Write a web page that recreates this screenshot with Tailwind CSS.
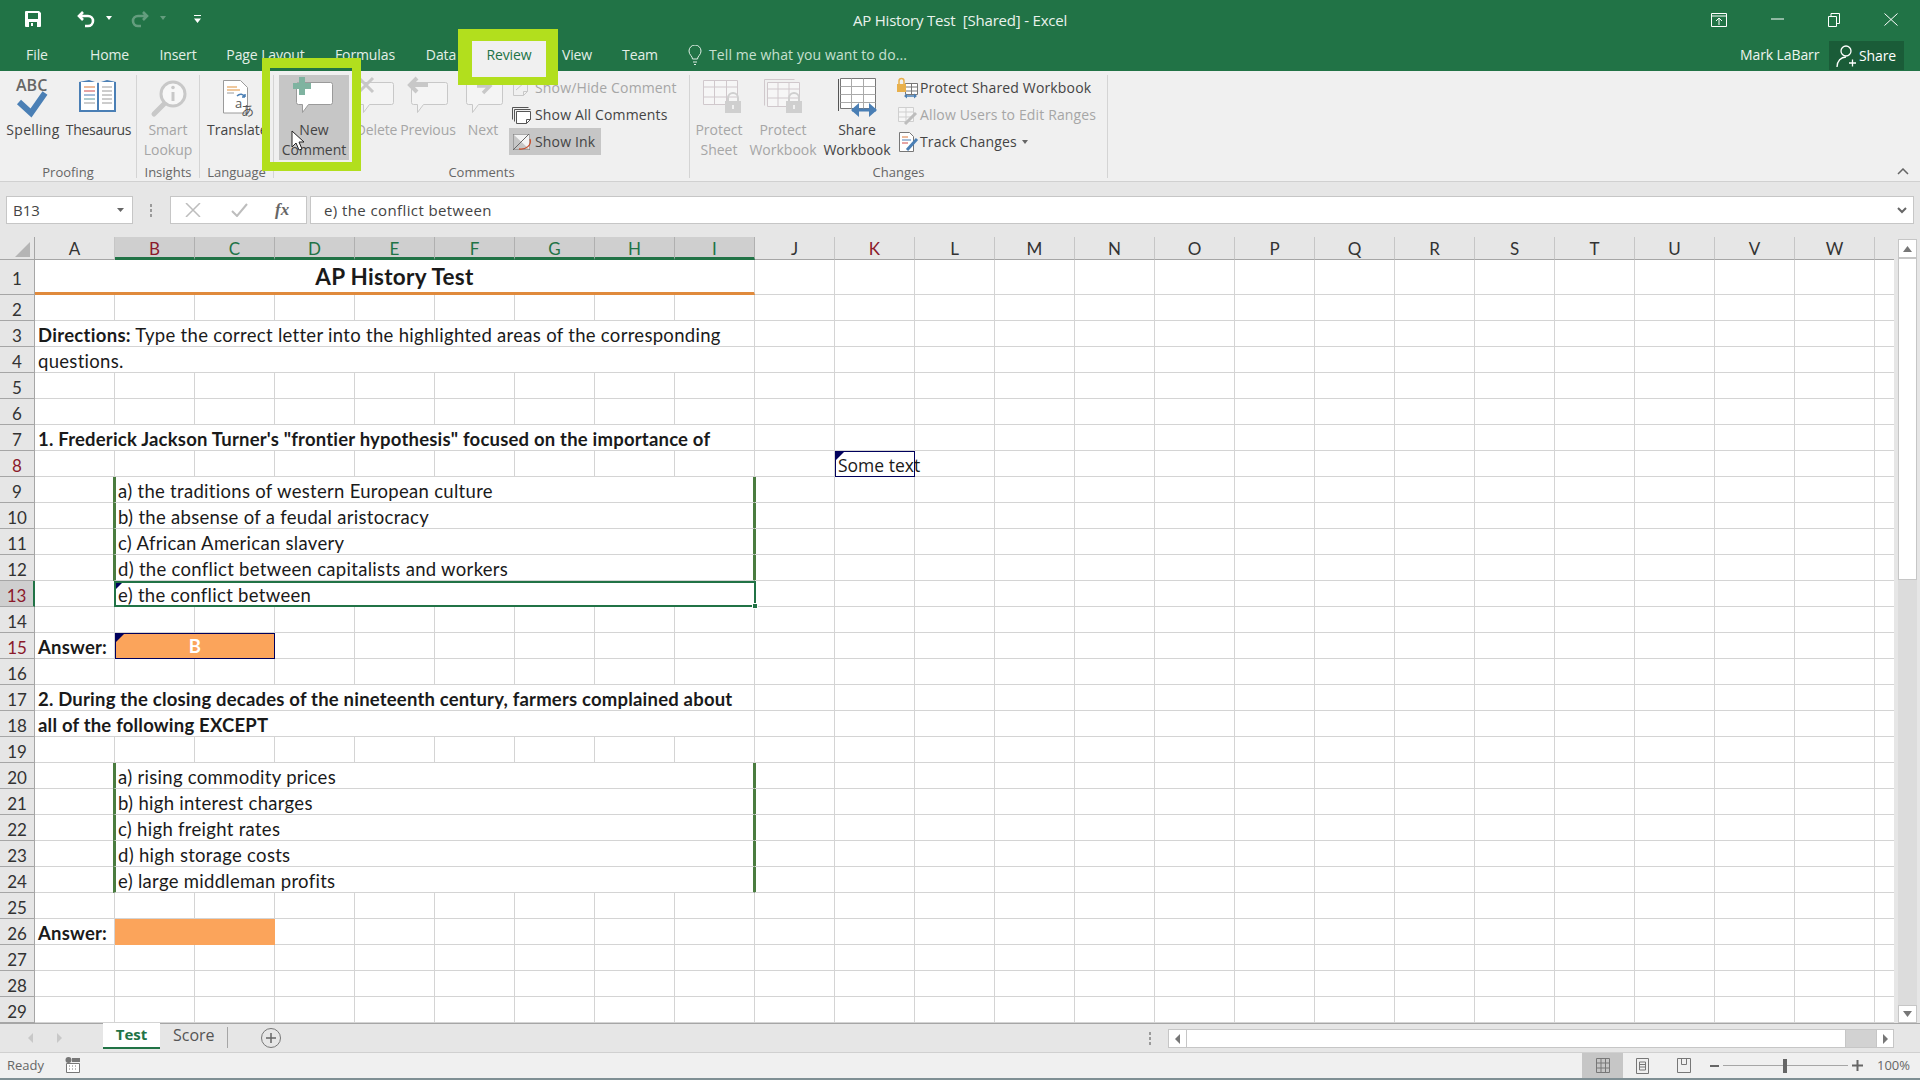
<!DOCTYPE html>
<html lang="en">
<head>
  <meta charset="UTF-8">
  <title>AP History Test [Shared] - Excel</title>
  <script src="https://cdn.jsdelivr.net/npm/@tailwindcss/browser@4"></script>
</head>
<body class="bg-white">
<div class="relative w-[1920px] h-[1080px] overflow-hidden flex flex-col font-['Open_Sans',sans-serif] text-[14px] text-[#444]">

  <!-- title bar + tabs -->
  <header class="h-[71px] bg-[#217346] text-white flex flex-col shrink-0">
    <div class="h-[37px] flex items-center relative">
      <svg class="absolute left-[25px] top-[11px] w-[16px] h-[16px]" viewBox="0 0 16 16"><path d="M1 0h13l2 2v13a1 1 0 0 1-1 1H1a1 1 0 0 1-1-1V1a1 1 0 0 1 1-1z" fill="#fff"/><path d="M3 2h10v6H3z" fill="#217346"/><path d="M4 11h8v5H4z" fill="#217346"/><path d="M6 12h2v3H6z" fill="#fff"/></svg>
      <svg class="absolute left-[76px] top-[10px] w-[20px] h-[18px]" viewBox="0 0 20 18"><path d="M7 2L3 6l4 4M3 6h9a4.500 4.500 0 0 1 0 10H9" fill="none" stroke="#fff" stroke-width="2.600"/></svg>
      <svg class="absolute left-[106px] top-[16px] w-[6px] h-[4px]" viewBox="0 0 6 4"><path d="M0 0h6L3 4z" fill="#fff"/></svg>
      <svg class="absolute left-[130px] top-[10px] w-[20px] h-[18px] opacity-30" viewBox="0 0 20 18"><path d="M13 2l4 4-4 4M17 6H8a4.500 4.500 0 0 0 0 10h3" fill="none" stroke="#fff" stroke-width="2.600"/></svg>
      <svg class="absolute left-[160px] top-[16px] w-[6px] h-[4px] opacity-30" viewBox="0 0 6 4"><path d="M0 0h6L3 4z" fill="#fff"/></svg>
      <svg class="absolute left-[194px] top-[15px] w-[7px] h-[8px]" viewBox="0 0 7 8"><path d="M0 0h7v1H0zM0 3.500h7L3.500 8z" fill="#fff"/></svg>
      <div class="w-full pt-[3px] text-center text-[15px] text-[#e9f2ec] tracking-[-0.2px] whitespace-pre">AP History Test  [Shared] - Excel</div>
      <svg class="absolute left-[1711px] top-[13px] w-[16px] h-[14px]" viewBox="0 0 16 14"><path d="M.5.500h15v13H.500zM.5 3h15M8 12V5M5 8l3-3 3 3" fill="none" stroke="#fff"/></svg>
      <svg class="absolute left-[1771px] top-[18px] w-[13px] h-[2px]" viewBox="0 0 13 2"><path d="M0 1h13" stroke="#fff"/></svg>
      <svg class="absolute left-[1828px] top-[13px] w-[12px] h-[14px]" viewBox="0 0 12 14"><path d="M.5 3.500h8v10h-8zM3 3.500V.500h8.500v10H8.500" fill="none" stroke="#fff"/></svg>
      <svg class="absolute left-[1884px] top-[13px] w-[14px] h-[13px]" viewBox="0 0 14 13"><path d="M.5.500l13 12M13.500.500l-13 12" fill="none" stroke="#fff"/></svg>
    </div>
    <div class="h-[34px] flex items-center relative text-[14px] text-[#e3efe7] tracking-[-0.1px] pt-px">
      <div class="w-[74px] text-center">File</div>
      <div class="w-[71px] text-center">Home</div>
      <div class="w-[66px] text-center">Insert</div>
      <div class="w-[109px] text-center">Page Layout</div>
      <div class="w-[90px] text-center">Formulas</div>
      <div class="w-[62px] text-center">Data</div>
      <div class="w-[74px] h-full bg-[#f0f0f0] text-[#217346] flex items-center justify-center">Review</div>
      <div class="w-[62px] text-center">View</div>
      <div class="w-[64px] text-center">Team</div>
      <svg class="ml-[15px] w-[16px] h-[20px]" viewBox="0 0 16 20"><path d="M5.500 14c0-3-3.500-4-3.500-8a6 6 0 0 1 12 0c0 4-3.500 5-3.500 8zM6 17h4M7 19.500h2" fill="none" stroke="#dfeee5"/></svg>
      <div class="ml-[6px] text-[#c6e0d0] tracking-[0.1px]">Tell me what you want to do...</div>
      <div class="absolute left-[1740px] top-[7px] text-[#eef5f0]">Mark LaBarr</div>
      <div class="absolute left-[1829px] top-[4px] w-[75px] h-[29px] bg-[#1a5c38] flex items-center">
        <svg class="ml-[7px] w-[21px] h-[24px]" viewBox="0 0 21 24"><circle cx="10" cy="7" r="5" fill="none" stroke="#fff" stroke-width="1.300"/><path d="M1 23c0-6 4-10 9-10M13 19h7M16.500 15.500v7" fill="none" stroke="#fff" stroke-width="1.300"/></svg>
        <span class="ml-[2px] text-white">Share</span>
      </div>
    </div>
  </header>

  <!-- ribbon -->
  <section class="h-[111px] bg-[#f0f0f0] border-b border-[#d0d0d0] shrink-0 flex pt-[4px] relative text-[14px] leading-[20px]">

    <div class="w-[137px] h-[103px] border-r border-[#d4d4d4]">
      <div class="flex h-[85px]">
        <div class="w-[66px] flex flex-col items-center">
          <svg class="w-[66px] h-[45px]" viewBox="0 0 66 45"><text x="16" y="16" font-family="Open Sans" font-size="16" font-weight="600" fill="#666">ABC</text><path d="M19 27l12 11L45 18" fill="none" stroke="#4a7fb5" stroke-width="6"/></svg>
          <div class="tracking-[0.3px]">Spelling</div>
        </div>
        <div class="w-[67px] flex flex-col items-center">
          <svg class="w-[67px] h-[45px]" viewBox="0 0 67 45"><path d="M13 7l10-2 9 3 9-3 9 2v30H13z" fill="#4a7fb5"/><path d="M15 7h16v28H15zM33 7h15v28H33z" fill="#fff"/><path d="M18 12h11" stroke="#d9763a"/><path d="M18 16h11" stroke="#cc4b4b"/><path d="M18 20h11" stroke="#4a7fb5"/><path d="M18 24h11" stroke="#5b9aa0"/><path d="M18 28h11M36 12h10M36 16h10M36 20h10M36 24h10M36 28h10" stroke="#9a9a9a"/></svg>
          <div class="tracking-[-0.3px] pr-[2px]">Thesaurus</div>
        </div>
      </div>
      <div class="h-[18px] leading-[25px] text-center text-[13px] text-[#666]">Proofing</div>
    </div>

    <div class="w-[63px] h-[103px] border-r border-[#d4d4d4]">
      <div class="flex flex-col items-center h-[85px] text-[#a6a6a6]">
        <svg class="w-[63px] h-[45px]" viewBox="0 0 63 45"><circle cx="36" cy="19" r="12" fill="#f7f7f7" stroke="#c8c8c8" stroke-width="3"/><path d="M27 29L17 39" stroke="#c8c8c8" stroke-width="5" stroke-linecap="round"/><path d="M36 17v9" stroke="#c8c8c8" stroke-width="3"/><circle cx="36" cy="12.500" r="1.800" fill="#c8c8c8"/></svg>
        <div>Smart</div>
        <div>Lookup</div>
      </div>
      <div class="h-[18px] leading-[25px] text-center text-[13px] text-[#666]">Insights</div>
    </div>

    <div class="w-[74px] h-[103px] border-r border-[#d4d4d4]">
      <div class="w-[74px] flex flex-col items-start h-[85px]">
        <svg class="w-[66px] h-[45px]" viewBox="0 0 66 45"><path d="M23.500 5.500h17l7 7v25.500h-24z" fill="#fff" stroke="#9a9a9a"/><path d="M27 12h10M27 15h13" stroke="#e0913c" stroke-width="1.200"/><path d="M27 18h7" stroke="#9a9a9a"/><path d="M37 21c3-3 6-2 8 1m0 0l-3 0m3 0l0-3" fill="none" stroke="#4a7fb5" stroke-width="1.500"/><text x="35" y="33" font-family="Open Sans" font-size="13" fill="#555">a</text><text x="41" y="40" font-family="Noto Sans CJK JP" font-size="13" fill="#555">あ</text></svg>
        <div class="pl-[7px]">Translate</div>
      </div>
      <div class="h-[18px] leading-[25px] text-center text-[13px] text-[#666]">Language</div>
    </div>

    <div class="w-[416px] h-[103px] border-r border-[#d4d4d4]">
      <div class="flex h-[85px]">
        <div class="ml-[5px] w-[70px] bg-[#c6c6c6] flex flex-col items-center">
          <svg class="w-[70px] h-[45px]" viewBox="0 0 70 45"><path transform="translate(17.500 7.500)" d="M2 0h32a2 2 0 0 1 2 2v18a2 2 0 0 1-2 2H12l-6 8v-8H2a2 2 0 0 1-2-2V2a2 2 0 0 1 2-2z" fill="#fff" stroke="#9a9a9a"/><path d="M20 2h6v6h6v6h-6v6h-6v-6h-6V8h6z" fill="#7fb3a0"/></svg>
          <div>New</div>
          <div>Comment</div>
        </div>
        <div class="w-[54px] flex flex-col items-center text-[#a6a6a6]">
          <svg class="w-[54px] h-[45px]" viewBox="0 0 54 45"><path transform="translate(8.500 7.500)" d="M2 0h32a2 2 0 0 1 2 2v18a2 2 0 0 1-2 2H12l-6 8v-8H2a2 2 0 0 1-2-2V2a2 2 0 0 1 2-2z" fill="#f4f4f4" stroke="#c8c8c8"/><path d="M10 3l14 14M24 3L10 17" stroke="#c8c8c8" stroke-width="3"/></svg>
          <div class="pl-[1px] tracking-[-0.1px]">Delete</div>
        </div>
        <div class="w-[50px] flex flex-col items-center text-[#a6a6a6]">
          <svg class="w-[50px] h-[45px]" viewBox="0 0 50 45"><path transform="translate(8.500 7.500)" d="M2 0h32a2 2 0 0 1 2 2v18a2 2 0 0 1-2 2H12l-6 8v-8H2a2 2 0 0 1-2-2V2a2 2 0 0 1 2-2z" fill="#f4f4f4" stroke="#c8c8c8"/><path d="M7 10h18M14 3l-7 7 7 7" fill="none" stroke="#c8c8c8" stroke-width="4"/></svg>
          <div class="tracking-[-0.1px]">Previous</div>
        </div>
        <div class="w-[56px] pl-[4px] flex flex-col items-center text-[#a6a6a6]">
          <svg class="w-[52px] h-[45px]" viewBox="0 0 52 45"><path transform="translate(9.500 7.500)" d="M2 0h32a2 2 0 0 1 2 2v18a2 2 0 0 1-2 2H12l-6 8v-8H2a2 2 0 0 1-2-2V2a2 2 0 0 1 2-2z" fill="#f4f4f4" stroke="#c8c8c8"/><path d="M20 11h12M26 4l7 7-7 7" fill="none" stroke="#c8c8c8" stroke-width="3.500"/></svg>
          <div>Next</div>
        </div>
        <div class="flex flex-col -mt-px tracking-[0.15px]">
          <div class="h-[27px] flex items-center text-[#a6a6a6]">
            <svg class="w-[26px] h-[20px]" viewBox="0 0 26 20"><path d="M4.500 4.500h14v9l-4 4h-10zM14.500 17.500v-4h4M7 12l9-8" fill="none" stroke="#c8c8c8"/></svg>
            <span>Show/Hide Comment</span>
          </div>
          <div class="h-[27px] flex items-center">
            <svg class="w-[26px] h-[20px]" viewBox="0 0 26 20"><path d="M3.500 2.500h16M3.500 2.500v12M5.500 4.500h16M5.500 4.500v12" fill="none" stroke="#555"/><path d="M7.500 6.500h14v8l-4 4h-10zM17.500 18.500v-4h4" fill="#fff" stroke="#555"/></svg>
            <span>Show All Comments</span>
          </div>
          <div class="h-[27px] w-[92px] bg-[#c6c6c6] flex items-center">
            <svg class="w-[26px] h-[20px]" viewBox="0 0 26 20"><path d="M4.500 2.500h16v15" fill="#f4f4f4" stroke="#777" stroke-dasharray="1 1"/><path d="M4.500 2.500v15h16" fill="none" stroke="#777" stroke-dasharray="1 1"/><path d="M4 18L20 2" stroke="#666"/><path d="M21 7c2 6-4 11-11 10" fill="none" stroke="#c8502f" stroke-width="1.300"/></svg>
            <span>Show Ink</span>
          </div>
        </div>
      </div>
      <div class="h-[18px] leading-[25px] text-center text-[13px] text-[#666]">Comments</div>
    </div>

    <div class="w-[418px] h-[103px] border-r border-[#d4d4d4]">
      <div class="flex h-[85px]">
        <div class="w-[58px] flex flex-col items-center text-[#a6a6a6]">
          <svg class="w-[58px] h-[45px]" viewBox="0 0 58 45"><path d="M13.500 5.500h34v24h-34zM13.500 12h34M13.500 22h34M24.500 5.500v24M36.500 5.500v24" fill="#f6f6f6" stroke="#d0c8cc"/><path d="M38 26v-3a5 5 0 0 1 10 0v3" fill="none" stroke="#cfcfcf" stroke-width="2"/><path d="M35 26h16v12H35z" fill="#cfcfcf"/><path d="M43 30v4" stroke="#f0f0f0" stroke-width="2"/></svg>
          <div>Protect</div>
          <div>Sheet</div>
        </div>
        <div class="w-[70px] flex flex-col items-center text-[#a6a6a6]">
          <svg class="w-[70px] h-[45px]" viewBox="0 0 70 45"><path d="M16.500 4.500h30M16.500 4.500v26M19.500 7.500h32v24h-32zM19.500 14h32M19.500 23h32M30 7.500v24M41 7.500v24" fill="#f6f6f6" stroke="#d0c8cc"/><path d="M41 26v-3a5 5 0 0 1 10 0v3" fill="none" stroke="#cfcfcf" stroke-width="2"/><path d="M38 26h16v12H38z" fill="#cfcfcf"/><path d="M46 30v4" stroke="#f0f0f0" stroke-width="2"/></svg>
          <div>Protect</div>
          <div>Workbook</div>
        </div>
        <div class="w-[78px] flex flex-col items-center">
          <svg class="w-[78px] h-[45px]" viewBox="0 0 78 45"><path d="M20.500 4v32" stroke="#555"/><path d="M22.500 3.500h35v30h-35z" fill="#fff" stroke="#777"/><path d="M22.500 11.500h35M22.500 19.500h35M22.500 27.500h35M33.500 3.500v30M45.500 3.500v30" stroke="#aaa"/><path d="M34 35h24" stroke="#4a7fb5" stroke-width="3"/><path d="M41 28l-8 7 8 7zM51 28l8 7-8 7z" fill="#4a7fb5"/></svg>
          <div>Share</div>
          <div>Workbook</div>
        </div>
        <div class="flex flex-col -mt-px tracking-[0.15px]">
          <div class="h-[27px] flex items-center">
            <svg class="w-[24px] h-[22px]" viewBox="0 0 24 22"><path d="M9.500 6.500h12v11h-12zM9.500 10h12M9.500 14h12M15.500 6.500v11" fill="#fff" stroke="#777"/><path d="M1 7h9v8H1z" fill="#e8b04c"/><path d="M3 7V4a2.500 2.500 0 0 1 5 0v3" fill="none" stroke="#e8b04c" stroke-width="1.500"/><path d="M9 19h11" stroke="#4a7fb5" stroke-width="1.500"/><path d="M11 16.500L8 19l3 2.500zM18 16.500l3 2.500-3 2.500z" fill="#4a7fb5"/></svg>
            <span>Protect Shared Workbook</span>
          </div>
          <div class="h-[27px] flex items-center text-[#a6a6a6]">
            <svg class="w-[24px] h-[22px]" viewBox="0 0 24 22"><path d="M2.500 3.500h15v14h-15zM2.500 8h15M2.500 13h15M10 3.500v14" fill="#f6f6f6" stroke="#cfcfcf"/><path d="M20 9L9 20" stroke="#bdbdbd" stroke-width="3"/></svg>
            <span>Allow Users to Edit Ranges</span>
          </div>
          <div class="h-[27px] flex items-center">
            <svg class="w-[24px] h-[22px]" viewBox="0 0 24 22"><path d="M3.500 1.500h10l4 4v15h-14z" fill="#fff" stroke="#777"/><path d="M6 6h6" stroke="#d9763a"/><path d="M6 9h9" stroke="#4a7fb5"/><path d="M6 12h6" stroke="#cc4b4b"/><path d="M21 8L11 19" stroke="#4a7fb5" stroke-width="3"/></svg>
            <span>Track Changes</span>
            <svg class="ml-[5px] w-[6px] h-[4px]" viewBox="0 0 6 4"><path d="M0 0h6L3 4z" fill="#666"/></svg>
          </div>
        </div>
      </div>
      <div class="h-[18px] leading-[25px] text-center text-[13px] text-[#666]">Changes</div>
    </div>

    <svg class="absolute left-[1897px] top-[97px] w-[12px] h-[7px]" viewBox="0 0 12 7"><path d="M1 6l5-5 5 5" fill="none" stroke="#666" stroke-width="1.500"/></svg>
  </section>

  <!-- formula bar -->
  <section class="h-[55px] bg-[#e6e6e6] shrink-0 flex items-start pt-[14px] text-[#444]">
    <div class="ml-[6px] w-[127px] h-[28px] bg-white border border-[#c6c6c6] flex items-center justify-between pl-[6px] pr-[8px] text-[15px]">
      <span>B13</span>
      <svg class="w-[7px] h-[4px]" viewBox="0 0 7 4"><path d="M0 0h7L3.500 4z" fill="#666"/></svg>
    </div>
    <svg class="ml-[16px] mt-[8px] w-[4px] h-[13px]" viewBox="0 0 4 13"><path d="M1 0h2v3H1zM1 5h2v3H1zM1 10h2v3H1z" fill="#9a9a9a"/></svg>
    <div class="ml-[17px] w-[137px] h-[28px] bg-white border border-[#c6c6c6] flex items-center text-[#888]">
      <svg class="ml-[14px] w-[16px] h-[14px]" viewBox="0 0 16 14"><path d="M1 0l14 14M15 0L1 14" stroke="#bdbdbd" stroke-width="1.500"/></svg>
      <svg class="ml-[30px] w-[17px] h-[14px]" viewBox="0 0 17 14"><path d="M1 8l5 5L16 1" fill="none" stroke="#bdbdbd" stroke-width="2"/></svg>
      <span class="ml-[27px] font-['Liberation_Serif',serif] italic font-bold text-[17px] text-[#666]">fx</span>
    </div>
    <div class="ml-[3px] w-[1604px] h-[28px] bg-white border border-[#c6c6c6] flex items-center justify-between pl-[13px] pr-[6px] text-[15px] tracking-[0.4px]">
      <span>e) the conflict between</span>
      <svg class="w-[10px] h-[7px]" viewBox="0 0 10 7"><path d="M1 1l4 4 4-4" fill="none" stroke="#666" stroke-width="2"/></svg>
    </div>
  </section>

  <!-- sheet -->
  <section class="h-[786px] shrink-0 flex bg-white">
    <div id="sheet" class="w-[1894px] grid grid-cols-[35px_repeat(23,80px)_19px] grid-rows-[23px_35px_repeat(28,26px)] font-['Lato',sans-serif] text-[18.500px] tracking-[0.3px] text-[#1a1a1a]"></div>
    <div class="w-[26px] bg-[#e6e6e6] flex flex-col items-center pt-[2px]">
      <div class="w-[19px] h-[19px] bg-white border border-[#c6c6c6] flex items-center justify-center">
        <svg class="w-[9px] h-[6px]" viewBox="0 0 9 6"><path d="M4.500 0L9 6H0z" fill="#777"/></svg>
      </div>
      <div class="w-[19px] h-[322px] bg-white border border-[#c6c6c6]"></div>
      <div class="w-[19px] flex-1 bg-[#dcdcdc]"></div>
      <div class="w-[19px] h-[18px] bg-white border border-[#c6c6c6] flex items-center justify-center">
        <svg class="w-[9px] h-[6px]" viewBox="0 0 9 6"><path d="M4.500 6L9 0H0z" fill="#777"/></svg>
      </div>
    </div>
  </section>

  <!-- sheet tabs -->
  <section class="h-[29px] bg-[#e6e6e6] border-t border-[#a6a6a6] shrink-0 relative">
    <svg class="absolute left-[28px] top-[9px] w-[5px] h-[10px]" viewBox="0 0 5 10"><path d="M5 0v10L0 5z" fill="#c8c8c8"/></svg>
    <svg class="absolute left-[57px] top-[9px] w-[5px] h-[10px]" viewBox="0 0 5 10"><path d="M0 0v10l5-5z" fill="#c8c8c8"/></svg>
    <div class="absolute left-[103px] top-[-1px] w-[57px] h-[26px] bg-white border-b-2 border-[#217346] flex items-center justify-center font-bold text-[#217346] text-[15px] pb-[2px]">Test</div>
    <div class="absolute left-[173px] top-[-1px] text-[16px] text-[#555]">Score</div>
    <div class="absolute left-[227px] top-[3px] w-px h-[21px] bg-[#a6a6a6]"></div>
    <svg class="absolute left-[261px] top-[4px] w-[20px] h-[20px]" viewBox="0 0 20 20"><circle cx="10" cy="10" r="9.500" fill="none" stroke="#777"/><path d="M10 5v10M5 10h10" stroke="#666" stroke-width="1.500"/></svg>
    <svg class="absolute left-[1148px] top-[8px] w-[4px] h-[13px]" viewBox="0 0 4 13"><path d="M1 0h2v3H1zM1 5h2v3H1zM1 10h2v3H1z" fill="#9a9a9a"/></svg>
    <div class="absolute left-[1168px] top-[5px] h-[19px] w-[726px] flex border border-[#c6c6c6] bg-[#d2d2d2]">
      <div class="w-[18px] bg-white border-r border-[#c6c6c6] flex items-center justify-center">
        <svg class="w-[5px] h-[10px]" viewBox="0 0 5 10"><path d="M5 0v10L0 5z" fill="#777"/></svg>
      </div>
      <div class="w-[659px] bg-white border-r border-[#c6c6c6]"></div>
      <div class="flex-1"></div>
      <div class="w-[17px] bg-white border-l border-[#c6c6c6] flex items-center justify-center">
        <svg class="w-[5px] h-[10px]" viewBox="0 0 5 10"><path d="M0 0v10l5-5z" fill="#777"/></svg>
      </div>
    </div>
  </section>

  <!-- status bar -->
  <footer class="h-[28px] bg-[#f0f0f0] border-t border-[#d0d0d0] border-b-2 border-b-[#7f8f94] shrink-0 relative text-[13px] text-[#666]">
    <div class="absolute left-[7px] top-[3px]">Ready</div>
    <svg class="absolute left-[65px] top-[4px] w-[15px] h-[16px]" viewBox="0 0 15 16"><circle cx="3.500" cy="3" r="3" fill="#777"/><path d="M7 1h8v4H7z" fill="#777"/><path d="M1.500 6.500h13v9h-13z" fill="#fff" stroke="#777"/><path d="M4 9h1M7 9h1M10 9h1M4 12h1M7 12h1M10 12h1" stroke="#777"/></svg>
    <div class="absolute left-[1582px] top-0 w-[41px] h-[25px] bg-[#c6c6c6] flex items-center justify-center">
      <svg class="w-[14px] h-[15px]" viewBox="0 0 14 15"><path d="M.5.500h13v14H.500zM.5 5h13M.5 10h13M5 .500v14M9.500.500v14" fill="none" stroke="#777"/></svg>
    </div>
    <svg class="absolute left-[1636px] top-[5px] w-[14px] h-[16px]" viewBox="0 0 14 16"><path d="M.5.500h12v15H.500zM3.500 4h6v8h-6zM3.500 6.500h6M3.500 9h6" fill="none" stroke="#777"/></svg>
    <svg class="absolute left-[1677px] top-[5px] w-[14px] h-[15px]" viewBox="0 0 14 15"><path d="M.5.500h13v14H.500zM4.500.500v6h5v-6" fill="none" stroke="#777"/></svg>
    <div class="absolute left-[1710px] top-[12px] w-[9px] h-[2px] bg-[#666]"></div>
    <div class="absolute left-[1723px] top-[12px] w-[125px] h-px bg-[#a6a6a6]"></div>
    <div class="absolute left-[1783px] top-[6px] w-[4px] h-[14px] bg-[#666]"></div>
    <svg class="absolute left-[1852px] top-[7px] w-[11px] h-[11px]" viewBox="0 0 11 11"><path d="M5.500 0v11M0 5.500h11" stroke="#666" stroke-width="2"/></svg>
    <div class="absolute left-[1877px] top-[3px]">100%</div>
  </footer>

  <!-- tutorial highlights -->
  <div class="absolute left-[458px] top-[29px] w-[100px] h-[56px] border-t-[12px] border-b-[8px] border-l-[14px] border-r-[12px] border-[#b2df1d]"></div>
  <div class="absolute left-[262px] top-[58px] w-[99px] h-[113px] border-t-[10px] border-b-[9px] border-l-[8px] border-r-[9px] border-[#b2df1d]"></div>
  <svg class="absolute left-[291px] top-[130px] w-[14px] h-[21px]" viewBox="0 0 14 21"><path d="M1 1v16l4-4 3 7 3-1-3-7h5z" fill="#fff" stroke="#222"/></svg>
</div>

<script>
  const letters = 'ABCDEFGHIJKLMNOPQRSTUVW'.split('');
  const sheet = document.getElementById('sheet');
  const gridLine = 'border-r border-b border-[#d4d4d4]';
  const listCell = 'col-span-8 -ml-[2px] -mr-px pl-[2px] pt-[4px] border-l-[3px] border-r-[3px] border-b border-l-[#4a7c3f] border-r-[#4a7c3f] border-b-[#d4d4d4] flex items-center whitespace-nowrap';
  const fullRow = 'col-span-9 pl-[3px] pt-[4px] border-r border-b border-[#d4d4d4] flex items-center whitespace-nowrap';
  const boldRow = 'font-bold tracking-[0.2px]';
  const answerCell = 'pl-[3px] pt-[4px] border-r border-b border-[#d4d4d4] flex items-center font-bold tracking-[0.2px]';
  const triangle = '<span class="absolute left-0 top-0 w-0 h-0 border-t-[8px] border-r-[8px] border-t-[#00005c] border-r-transparent"></span>';

  // col is 0 for A; span is how many columns the cell covers
  const cells = {
    1: [{ col: 0, span: 9, cls: 'col-span-9 pt-[2px] border-r border-b-[3px] border-r-[#d4d4d4] border-b-[#e08a3c] flex items-center justify-center font-bold text-[22.500px]', html: 'AP History Test' }],
    3: [{ col: 0, span: 9, cls: fullRow, html: '<b>Directions:</b>&nbsp;Type the correct letter into the highlighted areas of the corresponding' }],
    4: [{ col: 0, span: 9, cls: fullRow, html: 'questions.' }],
    7: [{ col: 0, span: 9, cls: fullRow + ' ' + boldRow, html: '1. Frederick Jackson Turner\'s "frontier hypothesis" focused on the importance of' }],
    8: [{ col: 10, span: 1, cls: 'relative border border-[#00005c] flex items-center pl-[2px] pt-[3px] whitespace-nowrap font-[\'Open_Sans\',sans-serif] text-[17.500px] tracking-normal z-10', html: triangle + 'Some text' }],
    9: [{ col: 1, span: 8, cls: listCell, html: 'a) the traditions of western European culture' }],
    10: [{ col: 1, span: 8, cls: listCell, html: 'b) the absense of a feudal aristocracy' }],
    11: [{ col: 1, span: 8, cls: listCell, html: 'c) African American slavery' }],
    12: [{ col: 1, span: 8, cls: listCell, html: 'd) the conflict between capitalists and workers' }],
    13: [{ col: 1, span: 8, cls: 'col-span-8 relative -ml-px -mr-px pl-[2px] pt-[4px] border-2 border-[#217346] flex items-center whitespace-nowrap',
      html: '<span class="absolute left-0 top-0 w-0 h-0 border-t-[6px] border-r-[6px] border-t-[#00005c] border-r-transparent"></span>e) the conflict between<span class="absolute right-[-4px] bottom-[-4px] w-[6px] h-[6px] bg-[#217346] border border-white"></span>' }],
    15: [
      { col: 0, span: 1, cls: answerCell, html: 'Answer:' },
      { col: 1, span: 2, cls: 'col-span-2 relative pt-[2px] bg-[#fba45b] border border-[#00005c] flex items-center justify-center font-bold text-white', html: triangle + 'B' }
    ],
    17: [{ col: 0, span: 9, cls: fullRow + ' ' + boldRow, html: '2. During the closing decades of the nineteenth century, farmers complained about' }],
    18: [{ col: 0, span: 9, cls: fullRow + ' ' + boldRow, html: 'all of the following EXCEPT' }],
    20: [{ col: 1, span: 8, cls: listCell, html: 'a) rising commodity prices' }],
    21: [{ col: 1, span: 8, cls: listCell, html: 'b) high interest charges' }],
    22: [{ col: 1, span: 8, cls: listCell, html: 'c) high freight rates' }],
    23: [{ col: 1, span: 8, cls: listCell, html: 'd) high storage costs' }],
    24: [{ col: 1, span: 8, cls: listCell, html: 'e) large middleman profits' }],
    26: [
      { col: 0, span: 1, cls: answerCell, html: 'Answer:' },
      { col: 1, span: 2, cls: 'col-span-2 bg-[#fba45b] border-b border-[#fba45b]', html: '' }
    ]
  };

  // header row
  let html = '<div class="bg-[#e6e6e6] border-r border-b border-[#a6a6a6] relative"><span class="absolute left-[15px] bottom-[2px] w-0 h-0 border-b-[15px] border-l-[15px] border-b-[#b5b5b5] border-l-transparent"></span></div>';
  letters.forEach((l, i) => {
    const selected = i >= 1 && i <= 8;
    const changed = l === 'B' || l === 'K';
    let cls = 'flex items-center justify-center border-r text-[17px] tracking-normal ';
    cls += selected ? 'pt-[3px] bg-[#cfcfcf] border-r-[#b0b0b0] border-b-[3px] border-b-[#217346] ' : 'pt-[2px] bg-[#e6e6e6] border-r-[#c6c6c6] border-b border-b-[#a6a6a6] ';
    cls += changed ? 'text-[#8b1a2b]' : selected ? 'text-[#217346]' : 'text-[#333]';
    html += `<div class="${cls}">${l}</div>`;
  });
  html += '<div class="bg-[#e6e6e6] border-b border-[#a6a6a6]"></div>';

  for (let r = 1; r <= 29; r++) {
    const changed = r === 8 || r === 13 || r === 15;
    let head = 'flex items-center justify-center pt-[4px] text-[17px] tracking-normal border-b border-b-[#a6a6a6] ';
    head += r === 13 ? 'bg-[#cfcfcf] border-r-2 border-r-[#217346] ' : 'bg-[#e6e6e6] border-r border-r-[#a6a6a6] ';
    head += changed ? 'text-[#8b1a2b]' : 'text-[#333]';
    html += `<div class="${head}">${r}</div>`;

    const rowCells = cells[r] || [];
    for (let c = 0; c < 23; c++) {
      const found = rowCells.find(x => x.col === c);
      if (found) {
        html += `<div class="${found.cls}">${found.html}</div>`;
        c += found.span - 1;
      } else {
        html += `<div class="${gridLine}"></div>`;
      }
    }
    html += '<div class="border-b border-[#d4d4d4]"></div>';
  }
  sheet.innerHTML = html;
</script>
</body>
</html>
